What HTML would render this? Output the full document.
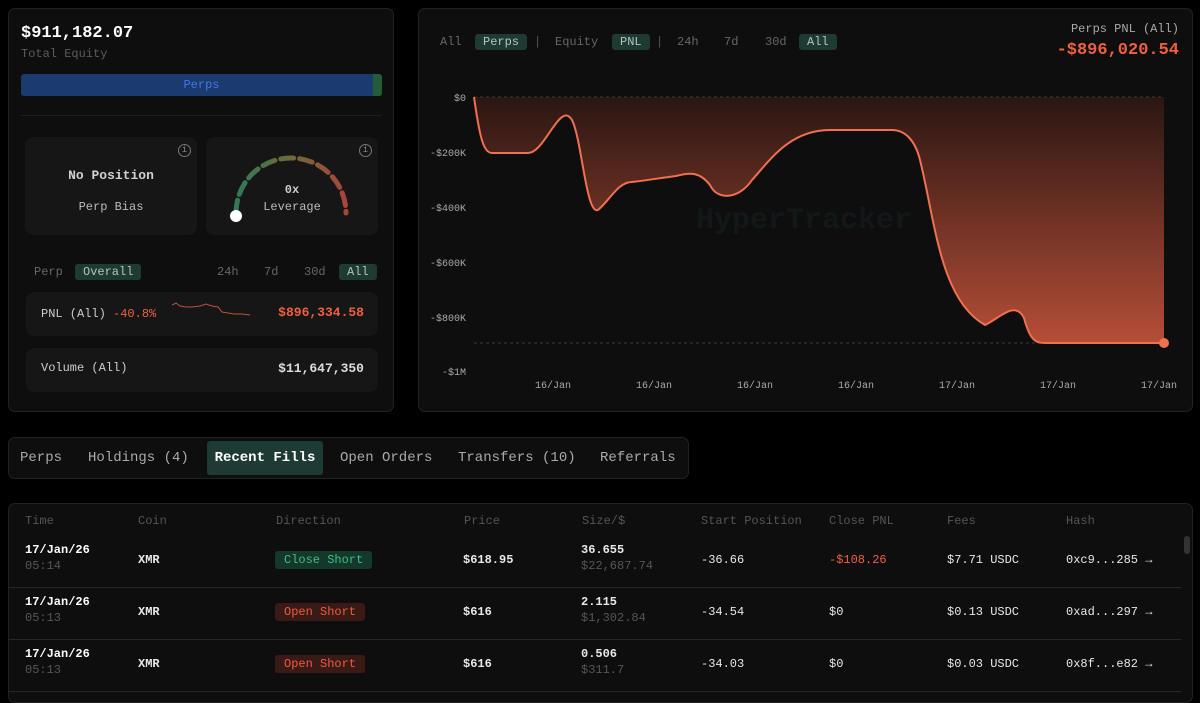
<!DOCTYPE html>
<html><head><meta charset="utf-8"><style>
*{box-sizing:border-box;margin:0;padding:0}
body{width:1200px;height:694px;background:#000;font-family:"Liberation Mono",monospace;color:#e8e8e8;position:relative;overflow:hidden;font-size:12px}
.card{position:absolute;background:#0e0e0f;border:1px solid #222;border-radius:7px}
.abs{position:absolute}
.sub{background:#161617;border-radius:8px;position:absolute}
.pill{display:inline-block;background:#1f3a33;color:#a9c9bf;border-radius:3px;padding:1px 8px}
.g{color:#777}
.red{color:#f0603f}
</style></head><body>

<div class="card" style="left:8px;top:8px;width:386px;height:404px">
  <div class="abs" style="left:12px;top:15px;font-size:17px;font-weight:bold;color:#fff">$911,182.07</div>
  <div class="abs g" style="left:12px;top:38px;font-size:12px;color:#5c5c5c">Total Equity</div>
  <div class="abs" style="left:12px;top:65px;width:361px;height:22px;background:#1b3a6e;border-radius:3px;overflow:hidden">
    <div style="text-align:center;line-height:22px;color:#3d7ae8;font-size:12px">Perps</div>
    <div class="abs" style="right:0;top:0;width:9px;height:22px;background:#245c3a"></div>
  </div>
  <div class="abs" style="left:12px;top:106px;width:361px;height:1px;background:#1f1f1f"></div>
  <div class="sub" style="left:16px;top:128px;width:172px;height:98px">
    <div class="abs" style="right:6px;top:7px;width:13px;height:13px;border:1px solid #777;border-radius:50%;font-size:9px;line-height:11px;text-align:center;color:#888">i</div>
    <div class="abs" style="left:0;width:100%;top:31px;text-align:center;font-weight:bold;font-size:13px;color:#d0d0d0">No Position</div>
    <div class="abs" style="left:0;width:100%;top:63px;text-align:center;font-size:12px;color:#bbb">Perp Bias</div>
  </div>
  <div class="sub" style="left:197px;top:128px;width:172px;height:98px">
    <div class="abs" style="right:6px;top:7px;width:13px;height:13px;border:1px solid #777;border-radius:50%;font-size:9px;line-height:11px;text-align:center;color:#888">i</div>
    <svg class="abs" style="left:0;top:0" width="172" height="98">
      <defs><linearGradient id="gg" x1="0" x2="1" y1="0" y2="0"><stop offset="0" stop-color="#2f7a55"/><stop offset="0.5" stop-color="#6e6a3a"/><stop offset="1" stop-color="#a8443a"/></linearGradient></defs>
      <path d="M30 76 A55 55 0 0 1 140 76" fill="none" stroke="url(#gg)" stroke-width="5" stroke-dasharray="13 6" stroke-linecap="round"/>
      <circle cx="30" cy="79" r="6" fill="#fff"/>
    </svg>
    <div class="abs" style="left:0;width:100%;top:46px;text-align:center;font-weight:bold;font-size:12px;color:#ccc">0x</div>
    <div class="abs" style="left:0;width:100%;top:63px;text-align:center;font-size:12px;color:#bbb">Leverage</div>
  </div>
  <div class="abs g" style="left:25px;top:256px;font-size:12px;color:#666">Perp</div>
  <div class="abs pill" style="left:66px;top:255px">Overall</div>
  <div class="abs" style="left:208px;top:256px;color:#666">24h</div>
  <div class="abs" style="left:255px;top:256px;color:#666">7d</div>
  <div class="abs" style="left:295px;top:256px;color:#666">30d</div>
  <div class="abs pill" style="left:330px;top:255px">All</div>
  <div class="sub" style="left:17px;top:283px;width:352px;height:44px">
    <div class="abs" style="left:15px;top:15px;color:#ccc">PNL (All) <span class="red">-40.8%</span></div>
    <svg class="abs" style="left:146px;top:10px" width="80" height="20"><path d="M0 3 L4 1 L8 4 L14 5 L20 5 L28 4 L34 2 L40 4 L46 5 L50 10 L56 11 L62 12 L70 12 L78 13" fill="none" stroke="#c0503c" stroke-width="1"/></svg>
    <div class="abs red" style="right:14px;top:13px;font-size:13px;font-weight:bold">$896,334.58</div>
  </div>
  <div class="sub" style="left:17px;top:339px;width:352px;height:44px">
    <div class="abs" style="left:15px;top:13px;color:#ccc">Volume (All)</div>
    <div class="abs" style="right:14px;top:13px;font-size:13px;font-weight:bold;color:#ddd">$11,647,350</div>
  </div>
</div>

<div class="card" style="left:418px;top:8px;width:775px;height:404px">
  <div class="abs" style="left:21px;top:26px;color:#666">All</div>
  <div class="abs pill" style="left:56px;top:25px">Perps</div>
  <div class="abs" style="left:115px;top:26px;color:#555">|</div>
  <div class="abs" style="left:136px;top:26px;color:#666">Equity</div>
  <div class="abs pill" style="left:193px;top:25px">PNL</div>
  <div class="abs" style="left:237px;top:26px;color:#555">|</div>
  <div class="abs" style="left:258px;top:26px;color:#666">24h</div>
  <div class="abs" style="left:305px;top:26px;color:#666">7d</div>
  <div class="abs" style="left:346px;top:26px;color:#666">30d</div>
  <div class="abs pill" style="left:380px;top:25px">All</div>
  <div class="abs" style="right:13px;top:13px;color:#aaa;font-size:12px">Perps PNL (All)</div>
  <div class="abs red" style="right:13px;top:32px;font-size:17px;font-weight:bold">-$896,020.54</div>
</div>
<svg class="abs" style="left:0;top:0" width="1200" height="420">
  <defs><linearGradient id="fg" x1="0" x2="0" y1="97" y2="343" gradientUnits="userSpaceOnUse"><stop offset="0" stop-color="#2a1612"/><stop offset="1" stop-color="#b54e37"/></linearGradient></defs>
  <g font-family="Liberation Mono,monospace" font-size="10" fill="#aaa">
    <text x="466" y="101" text-anchor="end">$0</text>
    <text x="466" y="156" text-anchor="end">-$200K</text>
    <text x="466" y="211" text-anchor="end">-$400K</text>
    <text x="466" y="266" text-anchor="end">-$600K</text>
    <text x="466" y="321" text-anchor="end">-$800K</text>
    <text x="466" y="375" text-anchor="end">-$1M</text>
    <text x="553" y="388" text-anchor="middle">16/Jan</text>
    <text x="654" y="388" text-anchor="middle">16/Jan</text>
    <text x="755" y="388" text-anchor="middle">16/Jan</text>
    <text x="856" y="388" text-anchor="middle">16/Jan</text>
    <text x="957" y="388" text-anchor="middle">17/Jan</text>
    <text x="1058" y="388" text-anchor="middle">17/Jan</text>
    <text x="1159" y="388" text-anchor="middle">17/Jan</text>
  </g>
  <path d="M474 97 C480 140 484 153 492 153 L528 153 C545 153 560 100 572 120 C582 140 586 215 598 210 C610 200 618 182 632 182 C650 180 660 178 676 176 C690 172 700 172 710 185 C718 202 740 198 752 180 C770 160 790 130 830 130 L892 130 C905 130 915 140 920 160 C935 220 940 300 985 325 C1000 318 1015 300 1024 318 C1030 340 1035 343 1045 343 L1164 343 L1164 97 Z" fill="url(#fg)"/>
  <text x="804" y="228" text-anchor="middle" font-family="Liberation Mono,monospace" font-size="30" font-weight="bold" fill="#141b1b" fill-opacity="0.8">HyperTracker</text>
  <line x1="474" y1="97" x2="1164" y2="97" stroke="#3a3a3a" stroke-dasharray="3 3"/>
  <line x1="474" y1="343" x2="1164" y2="343" stroke="#3a3a3a" stroke-dasharray="3 3"/>
  <path d="M474 97 C480 140 484 153 492 153 L528 153 C545 153 560 100 572 120 C582 140 586 215 598 210 C610 200 618 182 632 182 C650 180 660 178 676 176 C690 172 700 172 710 185 C718 202 740 198 752 180 C770 160 790 130 830 130 L892 130 C905 130 915 140 920 160 C935 220 940 300 985 325 C1000 318 1015 300 1024 318 C1030 340 1035 343 1045 343 L1164 343" fill="none" stroke="#f0704f" stroke-width="2"/>
  <circle cx="1164" cy="343" r="5" fill="#f0704f"/>
</svg>

<div class="card" style="left:8px;top:437px;width:681px;height:42px;font-size:14px;color:#aaa">
  <div class="abs" style="left:11px;top:12px">Perps</div>
  <div class="abs" style="left:79px;top:12px">Holdings (4)</div>
  <div class="abs" style="left:198px;top:3px;width:116px;height:34px;background:#1e3a35;border-radius:3px;color:#fff;font-weight:bold;line-height:34px;text-align:center">Recent Fills</div>
  <div class="abs" style="left:331px;top:12px">Open Orders</div>
  <div class="abs" style="left:449px;top:12px">Transfers (10)</div>
  <div class="abs" style="left:591px;top:12px">Referrals</div>
</div>

<div class="card" style="left:8px;top:503px;width:1185px;height:200px;font-size:12px">
  <div class="abs" style="top:10px;left:16px;color:#555;width:1170px">
    <span class="abs" style="left:0">Time</span><span class="abs" style="left:113px">Coin</span><span class="abs" style="left:251px">Direction</span><span class="abs" style="left:439px">Price</span><span class="abs" style="left:557px">Size/$</span><span class="abs" style="left:676px">Start Position</span><span class="abs" style="left:804px">Close PNL</span><span class="abs" style="left:922px">Fees</span><span class="abs" style="left:1041px">Hash</span>
  </div>
  <div class="abs" style="right:2px;top:32px;width:6px;height:18px;background:#333;border-radius:3px"></div>
  <div class="abs" style="left:0;top:33px;width:1172px;height:51px;border-bottom:1px solid #262626">
    <div class="abs" style="left:16px;top:6px;color:#fff;font-weight:bold">17/Jan/26</div><div class="abs" style="left:16px;top:22px;color:#555">05:14</div>
    <div class="abs" style="left:129px;top:16px;font-weight:bold">XMR</div>
    <div class="abs" style="left:266px;top:14px;background:#14382b;color:#3fbf84;padding:2px 9px;border-radius:3px">Close Short</div>
    <div class="abs" style="left:454px;top:16px;font-weight:bold">$618.95</div>
    <div class="abs" style="left:572px;top:6px;font-weight:bold">36.655</div><div class="abs" style="left:572px;top:22px;color:#555">$22,687.74</div>
    <div class="abs" style="left:692px;top:16px">-36.66</div>
    <div class="abs red" style="left:820px;top:16px">-$108.26</div>
    <div class="abs" style="left:938px;top:16px">$7.71 USDC</div>
    <div class="abs" style="left:1057px;top:16px">0xc9...285 →</div>
  </div>
  <div class="abs" style="left:0;top:85px;width:1172px;height:51px;border-bottom:1px solid #262626">
    <div class="abs" style="left:16px;top:6px;color:#fff;font-weight:bold">17/Jan/26</div><div class="abs" style="left:16px;top:22px;color:#555">05:13</div>
    <div class="abs" style="left:129px;top:16px;font-weight:bold">XMR</div>
    <div class="abs" style="left:266px;top:14px;background:#3a1a16;color:#ef5a42;padding:2px 9px;border-radius:3px">Open Short</div>
    <div class="abs" style="left:454px;top:16px;font-weight:bold">$616</div>
    <div class="abs" style="left:572px;top:6px;font-weight:bold">2.115</div><div class="abs" style="left:572px;top:22px;color:#555">$1,302.84</div>
    <div class="abs" style="left:692px;top:16px">-34.54</div>
    <div class="abs" style="left:820px;top:16px">$0</div>
    <div class="abs" style="left:938px;top:16px">$0.13 USDC</div>
    <div class="abs" style="left:1057px;top:16px">0xad...297 →</div>
  </div>
  <div class="abs" style="left:0;top:137px;width:1172px;height:51px;border-bottom:1px solid #262626">
    <div class="abs" style="left:16px;top:6px;color:#fff;font-weight:bold">17/Jan/26</div><div class="abs" style="left:16px;top:22px;color:#555">05:13</div>
    <div class="abs" style="left:129px;top:16px;font-weight:bold">XMR</div>
    <div class="abs" style="left:266px;top:14px;background:#3a1a16;color:#ef5a42;padding:2px 9px;border-radius:3px">Open Short</div>
    <div class="abs" style="left:454px;top:16px;font-weight:bold">$616</div>
    <div class="abs" style="left:572px;top:6px;font-weight:bold">0.506</div><div class="abs" style="left:572px;top:22px;color:#555">$311.7</div>
    <div class="abs" style="left:692px;top:16px">-34.03</div>
    <div class="abs" style="left:820px;top:16px">$0</div>
    <div class="abs" style="left:938px;top:16px">$0.03 USDC</div>
    <div class="abs" style="left:1057px;top:16px">0x8f...e82 →</div>
  </div>
</div>
</body></html>
